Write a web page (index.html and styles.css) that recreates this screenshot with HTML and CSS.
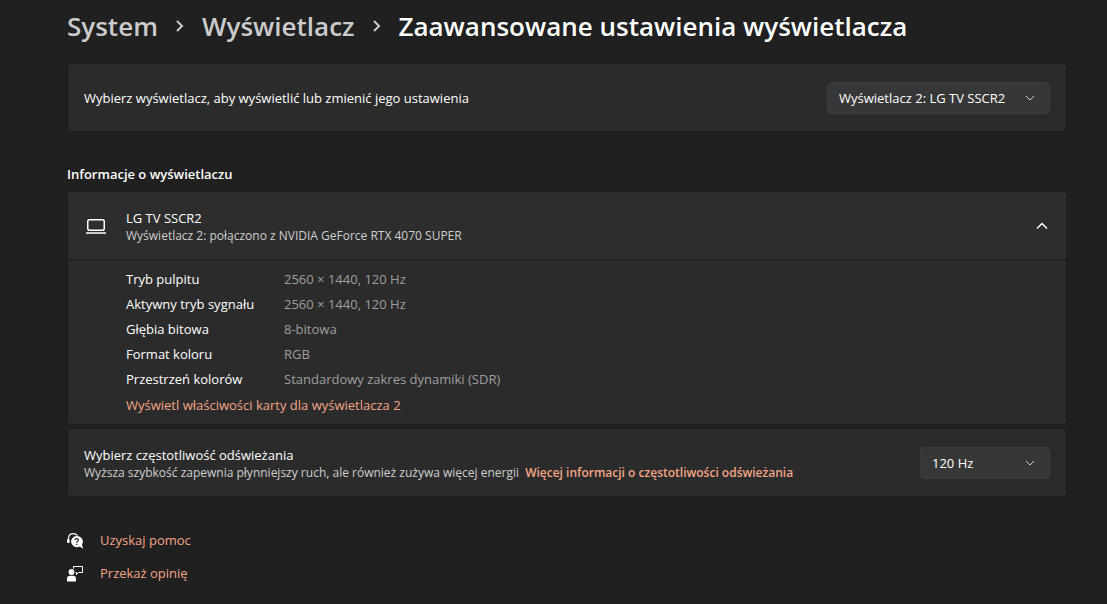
FILE: index.html
```html
<!DOCTYPE html>
<html lang="pl">
<head>
<meta charset="utf-8">
<meta name="viewport" content="width=device-width, initial-scale=1">
<title>Zaawansowane ustawienia wyświetlacza</title>
<link rel="stylesheet" href="styles.css">
</head>
<body>
<main class="page">
  <nav class="breadcrumb" aria-label="Nawigacja">
    <a class="crumb" href="#system">System</a>
    <svg class="crumb-sep" viewBox="0 0 10 14" aria-hidden="true"><path d="M2 2l5 5-5 5"/></svg>
    <a class="crumb" href="#display">Wyświetlacz</a>
    <svg class="crumb-sep" viewBox="0 0 10 14" aria-hidden="true"><path d="M3 2l5 5-5 5"/></svg>
    <h1 class="crumb crumb-current">Zaawansowane ustawienia wyświetlacza</h1>
  </nav>

  <section class="card setting">
    <label class="setting-title" for="display">Wybierz wyświetlacz, aby wyświetlić lub zmienić jego ustawienia</label>
    <span class="picker picker-wide">
      <select id="display"><option>Wyświetlacz 2: LG TV SSCR2</option></select>
      <svg class="picker-arrow" viewBox="0 0 10 6" aria-hidden="true"><path d="M1 1l4 4 4-4"/></svg>
    </span>
  </section>

  <h2 class="section-title">Informacje o wyświetlaczu</h2>

  <section class="card">
    <button class="expander" type="button" aria-expanded="true" aria-controls="details">
      <svg class="device" viewBox="0 0 20 16" aria-hidden="true"><rect x="1.75" y="1.75" width="16.5" height="10.5" rx="1.8"/><path d="M0 15h20"/></svg>
      <span class="stack">
        <span class="setting-title">LG TV SSCR2</span>
        <span class="setting-note">Wyświetlacz 2: połączono z NVIDIA GeForce RTX 4070 SUPER</span>
      </span>
      <svg class="expander-arrow" viewBox="0 0 12 8" aria-hidden="true"><path d="M1 6.5l5-5 5 5"/></svg>
    </button>
    <div class="details" id="details">
      <dl class="facts">
        <dt>Tryb pulpitu</dt><dd>2560 × 1440, 120 Hz</dd>
        <dt>Aktywny tryb sygnału</dt><dd>2560 × 1440, 120 Hz</dd>
        <dt>Głębia bitowa</dt><dd>8-bitowa</dd>
        <dt>Format koloru</dt><dd>RGB</dd>
        <dt>Przestrzeń kolorów</dt><dd>Standardowy zakres dynamiki (SDR)</dd>
      </dl>
      <a class="link" href="#adapter">Wyświetl właściwości karty dla wyświetlacza 2</a>
    </div>
  </section>

  <section class="card setting setting-next">
    <div class="stack">
      <label class="setting-title" for="rate">Wybierz częstotliwość odświeżania</label>
      <span class="setting-note">Wyższa szybkość zapewnia płynniejszy ruch, ale również zużywa więcej energii <a class="link link-strong" href="#rate-info">Więcej informacji o częstotliwości odświeżania</a></span>
    </div>
    <span class="picker picker-narrow">
      <select id="rate"><option>120 Hz</option></select>
      <svg class="picker-arrow" viewBox="0 0 10 6" aria-hidden="true"><path d="M1 1l4 4 4-4"/></svg>
    </span>
  </section>

  <footer class="support">
    <a class="support-link" href="#help">
      <svg class="support-icon" viewBox="0 0 16 16" aria-hidden="true">
        <path d="M1.500 8V5.300Q1.800.700 6.200.700 9 .700 10.500 2.700" fill="none" stroke="currentColor" stroke-width="1.200"/>
        <path d="M0 6.500h2.500V10H1.200Q0 10 0 8.800z"/>
        <path d="M9.700 3a5.600 5.600 0 1 0 2.900 10.400l3.400 2.300-1-4.200A5.600 5.600 0 0 0 9.700 3z"/>
        <path d="M8 7.100c.1-2 3.400-2 3.400 0 0 1.300-1.700 1.300-1.700 2.700M9.700 10.800V12" fill="none" stroke="#202020" stroke-width="1.200"/>
      </svg>
      <span>Uzyskaj pomoc</span>
    </a>
    <a class="support-link" href="#feedback">
      <svg class="support-icon" viewBox="0 0 16 16" aria-hidden="true">
        <circle cx="4.500" cy="6" r="2.900"/>
        <path d="M0 15.500V13Q0 9.800 3 9.800h3q3 0 3 3.200v2.500z"/>
        <path d="M6.500 2.500v-2h9v6h-4l-2 2v-2H8.500" fill="none" stroke="currentColor"/>
      </svg>
      <span>Przekaż opinię</span>
    </a>
  </footer>
</main>
</body>
</html>
```
FILE: styles.css
```css
* { box-sizing: border-box; }

body {
  margin: 0;
  background: #202020;
  color: #fff;
  font: 13px/20px "Open Sans", "Noto Sans", sans-serif;
}

.page { padding: 7px 40px 8px 67px; }

.breadcrumb {
  display: flex;
  align-items: center;
  gap: 17px;
  margin-bottom: 18px;
}

.crumb {
  margin: 0;
  color: #cbcbcb;
  font-size: 26px;
  font-weight: 600;
  line-height: 38px;
  text-decoration: none;
  white-space: nowrap;
}

.crumb-current { color: #fff; }

.crumb-sep {
  flex: none;
  width: 10px;
  height: 14px;
  fill: none;
  stroke: #cbcbcb;
  stroke-width: 2;
}

.card {
  border: 1px solid #1d1d1d;
  border-radius: 4px;
  background: #2b2b2b;
}

.setting {
  display: flex;
  align-items: center;
  justify-content: space-between;
  gap: 16px;
  min-height: 69px;
  padding: 12px 16px;
}

.setting-next { margin-top: 3px; }

.stack {
  display: flex;
  flex-direction: column;
}

.setting-note {
  color: #cfcfcf;
  font-size: 12px;
  line-height: 16px;
}

.picker {
  display: grid;
  flex: none;
  align-items: center;
}

.picker-wide { width: 223px; }
.picker-narrow { width: 130px; }

.picker select {
  grid-area: 1 / 1;
  width: 100%;
  height: 32px;
  padding: 0 32px 0 11px;
  border: 1px solid #3c3c3c;
  border-radius: 4px;
  background: #373737;
  color: #fff;
  font: inherit;
  appearance: none;
}

.picker-arrow {
  grid-area: 1 / 1;
  justify-self: end;
  width: 10px;
  height: 6px;
  margin-right: 15px;
  fill: none;
  stroke: #cfcfcf;
  pointer-events: none;
}

.section-title {
  margin: 32px 0 7px;
  font-size: 13px;
  font-weight: 600;
  line-height: 20px;
}

.expander {
  display: flex;
  align-items: center;
  gap: 20px;
  width: 100%;
  min-height: 68px;
  padding: 0 18px;
  border: 0;
  border-bottom: 1px solid #1d1d1d;
  border-radius: 3px 3px 0 0;
  background: #2d2d2d;
  color: inherit;
  font: inherit;
  text-align: left;
}

.device {
  flex: none;
  width: 20px;
  height: 16px;
  fill: none;
  stroke: #fff;
  stroke-width: 1.5;
}

.expander-arrow {
  width: 12px;
  height: 8px;
  margin-left: auto;
  fill: none;
  stroke: #fff;
  stroke-width: 1.5;
}

.details { padding: 7px 58px 6px; }

.facts {
  display: grid;
  grid-template-columns: 158px 1fr;
  margin: 0;
  line-height: 25px;
}

.facts dd {
  margin: 0;
  color: #9f9f9f;
}

.link {
  color: #f4a585;
  text-decoration: none;
}

.details .link {
  display: inline-block;
  line-height: 26px;
}

.link-strong {
  margin-left: 3px;
  font-weight: 600;
}

.support {
  display: flex;
  flex-direction: column;
  align-items: flex-start;
  margin-top: 27px;
}

.support-link {
  display: flex;
  align-items: center;
  gap: 17px;
  color: #f4a585;
  line-height: 33px;
  text-decoration: none;
}

.support-icon {
  width: 16px;
  height: 16px;
  fill: currentColor;
  color: #fff;
}
```
